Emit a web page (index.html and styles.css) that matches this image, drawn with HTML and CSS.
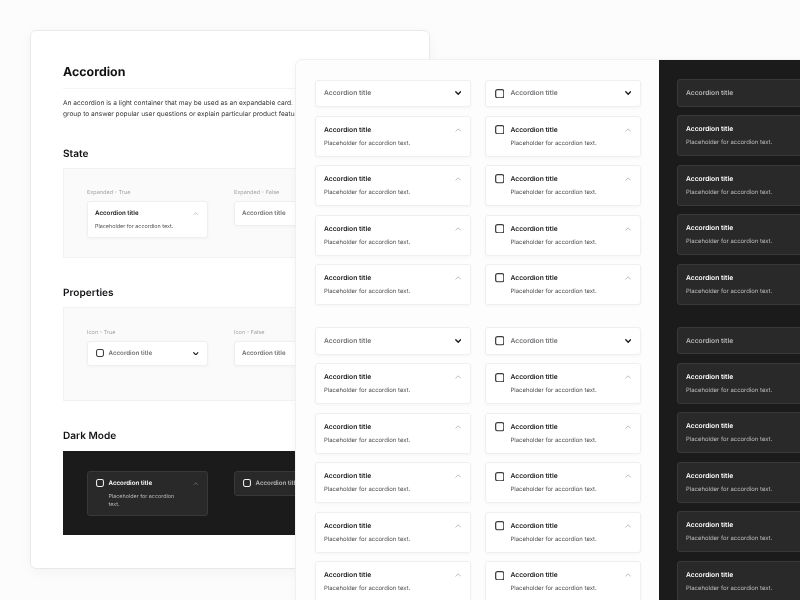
FILE: index.html
```html
<!DOCTYPE html>
<html lang="en">
<head>
<meta charset="utf-8">
<title>Accordion</title>
<link rel="stylesheet" href="styles.css">
</head>
<body>
<svg class="defs" aria-hidden="true">
  <symbol id="up" viewBox="0 0 8 5"><path d="M1 4 L4 1 L7 4" fill="none" stroke="currentColor" stroke-width="1.1" stroke-linecap="round" stroke-linejoin="round"/></symbol>
  <symbol id="down" viewBox="0 0 8 5"><path d="M1 1 L4 4 L7 1" fill="none" stroke="currentColor" stroke-width="1.7" stroke-linecap="round" stroke-linejoin="round"/></symbol>
  <symbol id="box" viewBox="0 0 10 10"><rect x="0.7" y="0.7" width="8.6" height="8.6" rx="2" fill="none" stroke="currentColor" stroke-width="1.3"/></symbol>
</svg>
<main class="stage">
  <section class="doc">
    <h1 class="doc-title">Accordion</h1>
    <p class="doc-text">An accordion is a light container that may be used as an expandable card. Use them in a<br>group to answer popular user questions or explain particular product features.</p>

    <h2 class="doc-head">State</h2>
    <div class="demo demo-state">
      <div class="demo-item"><span class="demo-label">Expanded - True</span>
        <div class="acc small open"><div class="acc-head"><span class="acc-title">Accordion title</span><svg class="chev"><use href="#up"/></svg></div><p class="acc-text">Placeholder for accordion text.</p></div>
      </div>
      <div class="demo-item"><span class="demo-label">Expanded - False</span>
        <div class="acc small"><div class="acc-head"><span class="acc-title">Accordion title</span><svg class="chev bold"><use href="#down"/></svg></div></div>
      </div>
    </div>

    <h2 class="doc-head">Properties</h2>
    <div class="demo demo-props">
      <div class="demo-item"><span class="demo-label">Icon - True</span>
        <div class="acc small"><div class="acc-head"><svg class="check"><use href="#box"/></svg><span class="acc-title">Accordion title</span><svg class="chev bold"><use href="#down"/></svg></div></div>
      </div>
      <div class="demo-item"><span class="demo-label">Icon - False</span>
        <div class="acc small"><div class="acc-head"><span class="acc-title">Accordion title</span><svg class="chev bold"><use href="#down"/></svg></div></div>
      </div>
    </div>

    <h2 class="doc-head">Dark Mode</h2>
    <div class="demo demo-dark dark">
      <div class="demo-item">
        <div class="acc small open"><div class="acc-head"><svg class="check"><use href="#box"/></svg><span class="acc-title">Accordion title</span><svg class="chev"><use href="#up"/></svg></div><p class="acc-text indent">Placeholder for accordion text.</p></div>
      </div>
      <div class="demo-item">
        <div class="acc small"><div class="acc-head"><svg class="check"><use href="#box"/></svg><span class="acc-title">Accordion title</span><svg class="chev"><use href="#down"/></svg></div></div>
      </div>
    </div>
  </section>

  <section class="sheet">
    <div class="side light">
      <div class="col" data-kind="plain"></div>
      <div class="col" data-kind="icon"></div>
    </div>
    <div class="side dark">
      <div class="col" data-kind="dark"></div>
    </div>
  </section>
</main>
<script src="app.js"></script>
</body>
</html>
```
FILE: styles.css
```css
* { box-sizing: border-box; }
html, body { margin: 0; padding: 0; }
body {
  width: 800px;
  height: 600px;
  overflow: hidden;
  background: #fcfcfc;
  font-family: Inter, "Liberation Sans", sans-serif;
  color: #111114;
  text-rendering: geometricPrecision;
}
.defs { position: absolute; width: 0; height: 0; }
.stage { position: relative; width: 800px; height: 600px; overflow: hidden; filter: blur(.3px); }

/* back document window */
.doc {
  position: absolute;
  left: 30px;
  top: 30px;
  width: 400px;
  height: 539px;
  padding: 32px 32px 0;
  background: #fff;
  border: 1px solid #e9e9ea;
  border-radius: 6px;
  box-shadow: 0 3px 14px rgba(0, 0, 0, .04);
  will-change: transform;
}
.doc-title {
  margin: 0;
  padding-bottom: 7px;
  border-bottom: 1px solid #f4f4f5;
  font-size: 12.4px;
  line-height: 18px;
  font-weight: 700;
}
.doc-text {
  margin: 8.5px 0 0;
  font-size: 6.6px;
  line-height: 11px;
  color: #36363a;
  white-space: nowrap;
}
.doc-head {
  margin: 28px 0 7px;
  font-size: 10.1px;
  line-height: 14px;
  font-weight: 600;
}
.doc-text + .doc-head { margin-top: 27.5px; }
.demo {
  display: flex;
  gap: 26px;
  padding: 19.5px 23px 0;
  background: #fafafa;
  border: 1px solid #f2f2f3;
}
.demo-state { height: 90px; }
.demo-props { height: 94px; padding-top: 20.5px; }
.demo-dark { height: 84px; margin-top: 8px; padding-top: 20px; background: #1b1b1c; border: 0; padding-left: 24px; }
.demo-item { display: flex; flex-direction: column; gap: 4.5px; width: 121px; flex: none; }
.demo-label { font-size: 5.5px; line-height: 8px; color: #a2a2a6; }

/* front sheet */
.sheet {
  position: absolute;
  left: 296px;
  top: 60px;
  width: 520px;
  height: 560px;
  display: flex;
  background: #fff;
  border-radius: 7px 0 0 0;
  box-shadow: 0 0 0 1px #f0f0f1, -2px 0 8px rgba(0, 0, 0, .03);
  overflow: hidden;
  will-change: transform;
}
.side { display: flex; height: 100%; }
.side.light { width: 363px; flex: none; gap: 14px; padding: 19.5px 0 0 19px; background: #fdfdfd; }
.side.dark { flex: 1; padding: 19px 0 0 18px; background: #1b1b1c; }
.col { display: flex; flex-direction: column; gap: 22.3px; width: 156px; flex: none; }
.group { display: flex; flex-direction: column; gap: 8.5px; }

/* accordion */
.acc {
  display: flex;
  flex-direction: column;
  justify-content: center;
  height: 27.6px;
  padding: 0 8px;
  background: #fff;
  border: 1px solid #efeff0;
  border-radius: 3px;
  box-shadow: 0 1px 3px rgba(0, 0, 0, .035);
}
.acc.open { height: 41px; justify-content: flex-start; padding-top: 7px; }
.acc-head { display: flex; align-items: center; height: 12px; }
.acc-title {
  flex: 1;
  font-size: 6.7px;
  line-height: 12px;
  font-weight: 600;
  color: #717175;
  white-space: nowrap;
}
.open .acc-title { color: #17171a; }
.acc-text {
  margin: 4px 0 0;
  font-size: 5.95px;
  line-height: 8px;
  color: #4e4e52;
  white-space: nowrap;
}
.chev { width: 6.4px; height: 4px; flex: none; margin-right: 1px; color: #b4b4b8; }
.chev.bold { color: #17171a; }
.check { width: 9.5px; height: 9.5px; flex: none; margin: 0 6.5px 0 .5px; color: #3a3a3e; }
.has-icon .acc-text { padding-left: 16.5px; }

.small { height: 25px; }
.small.open { height: 37px; padding-top: 5.5px; }
.small { padding: 0 7px; }
.small .acc-title { font-size: 6.2px; }
.small .acc-text { font-size: 5.4px; margin-top: 3px; }
.small .check { width: 8px; height: 8px; margin: -1px 5px 0 .5px; }
.small .chev { width: 5.6px; height: 3.5px; margin-right: 1px; }
.small .acc-head { height: 12px; }

.acc-text.indent { padding-left: 13.5px; white-space: normal; line-height: 8.3px; width: 78px; box-sizing: content-box; padding-right: 0; }
.demo-dark .small.open { height: 45px; }

.dark .acc {
  background: #29292a;
  border-color: #39393b;
  box-shadow: none;
}
.dark .acc-title { color: #b6b6b8; }
.dark .open .acc-title { color: #fff; }
.dark .acc-text { color: #bcbcbe; }
.dark .chev { color: #77777a; }
.dark .check { color: #f0f0f0; }
```
FILE: app.js
```js
var ups = '<svg class="chev"><use href="#up"/></svg>';
var downs = '<svg class="chev bold"><use href="#down"/></svg>';
var box = '<svg class="check"><use href="#box"/></svg>';

function card(kind, open) {
  var icon = kind === 'icon' ? box : '';
  var chev = kind === 'dark' ? '' : (open ? ups : downs);
  var text = open ? '<p class="acc-text">Placeholder for accordion text.</p>' : '';
  return '<div class="acc' + (open ? ' open' : '') + '"><div class="acc-head">' + icon +
    '<span class="acc-title">Accordion title</span>' + chev + '</div>' + text + '</div>';
}

function group(kind, count) {
  var html = card(kind, false);
  for (var i = 0; i < count; i++) html += card(kind, true);
  return '<div class="group' + (kind === 'icon' ? ' has-icon' : '') + '">' + html + '</div>';
}

document.querySelectorAll('.col').forEach(function (col) {
  var kind = col.getAttribute('data-kind');
  col.innerHTML = group(kind, 4) + group(kind, 5);
});
```
